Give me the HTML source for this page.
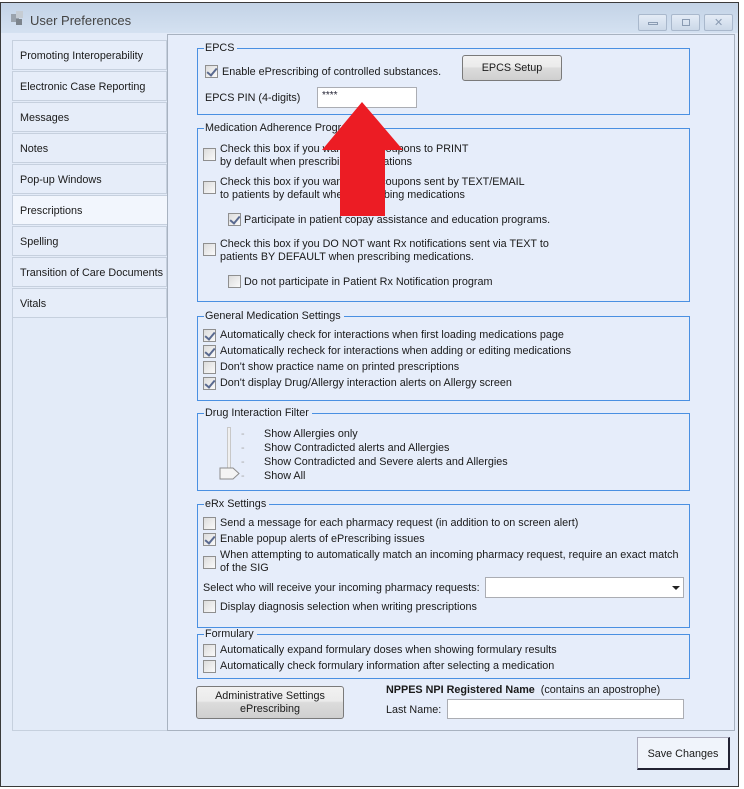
<!DOCTYPE html>
<html><head><style>
*{box-sizing:border-box;margin:0;padding:0}
body{width:744px;height:789px;background:#fff;font-family:"Liberation Sans",sans-serif;font-size:10.8px;color:#1a1a1a;position:relative;overflow:hidden}
.a{position:absolute;white-space:nowrap}
.win{position:absolute;left:0;top:2px;width:739px;height:785px;border:1px solid #3a3a3a;background:#e3ebf8}
.title{position:absolute;left:0;top:0;width:737px;height:30px;background:linear-gradient(#c3d3e6,#d4e1f1)}
.wb{position:absolute;top:11px;width:29px;height:17px;border:1px solid #a9b8cc;border-radius:2px;background:linear-gradient(#e4ecf6,#cbd8e8)}
.tab{position:absolute;left:12px;width:155px;height:30px;background:#e6edf9;border:1px solid #c6d0de;padding:9px 0 0 7px}
.panel{position:absolute;left:167px;top:34px;width:568px;height:697px;border:1px solid #a8b2c0;background:#e6edfa}
.g{position:absolute;border:1px solid #4a90e2}
.gl{position:absolute;top:-7px;left:6px;background:#e6edfa;padding:0 3px 0 1px}
.cb{position:absolute;width:13px;height:13px;border:1px solid #8f8f8f;background:linear-gradient(135deg,#dcdcdc,#fafafa)}
.cb.c::after{content:"";position:absolute;left:3px;top:0px;width:4px;height:8px;border:solid #5a6a90;border-width:0 2px 2px 0;transform:rotate(40deg)}
.btn{position:absolute;border:1px solid #7a7a7a;border-radius:3px;background:linear-gradient(#f2f2f2 0,#ebebeb 45%,#dcdcdc 50%,#cfcfcf);text-align:center}
.inp{position:absolute;background:#fff;border:1px solid #abadb3}
</style></head><body>
<div class="win">
 <div class="title"></div>
 <div class="a" style="left:10px;top:11px;width:8px;height:8px;background:#9aa3ad"></div>
 <div class="a" style="left:15px;top:8px;width:7px;height:7px;background:#c5ccd3"></div>
 <div class="a" style="left:15px;top:16px;width:6px;height:6px;background:#7c848c"></div>
 <div class="a" style="left:29px;top:10px;font-size:13px;color:#444">User Preferences</div>
 <div class="wb" style="left:637px"><div class="a" style="left:9px;top:7px;width:10px;height:3px;border:1px solid #8a9bb2"></div></div>
 <div class="wb" style="left:670px"><div class="a" style="left:10px;top:4px;width:8px;height:7px;border:1px solid #8a9bb2"></div></div>
 <div class="wb" style="left:703px"><div class="a" style="left:9px;top:1px;font-size:11px;color:#8a9bb2">✕</div></div>
</div>
<div class="tab" style="top:40px">Promoting Interoperability</div>
<div class="tab" style="top:71px">Electronic Case Reporting</div>
<div class="tab" style="top:102px">Messages</div>
<div class="tab" style="top:133px">Notes</div>
<div class="tab" style="top:164px">Pop-up Windows</div>
<div class="tab" style="top:195px;background:#f2f6fd;width:157px;border-right:none">Prescriptions</div>
<div class="tab" style="top:226px">Spelling</div>
<div class="tab" style="top:257px">Transition of Care Documents</div>
<div class="tab" style="top:288px;height:30px">Vitals</div>
<div class="a" style="left:12px;top:318px;width:155px;height:413px;border-left:1px solid #c6d0de;border-bottom:1px solid #c6d0de"></div>
<div class="panel"></div>

<div class="g" style="left:197px;top:48px;width:493px;height:67px"><div class="gl">EPCS</div></div>
<div class="cb c" style="left:205px;top:65px"></div>
<div class="a" style="left:222px;top:66px">Enable ePrescribing of controlled substances.</div>
<div class="btn" style="left:462px;top:55px;width:100px;height:26px;padding-top:6px">EPCS Setup</div>
<div class="a" style="left:205px;top:92px">EPCS PIN (4-digits)</div>
<div class="inp" style="left:317px;top:87px;width:100px;height:21px;padding:2px 4px;font-size:10px;color:#223">****</div>

<div class="g" style="left:197px;top:128px;width:493px;height:174px"><div class="gl">Medication Adherence Program</div></div>
<div class="cb" style="left:203px;top:148px"></div>
<div class="a" style="left:220px;top:143px;line-height:13px">Check this box if you want copay coupons to PRINT<br>by default when prescribing medications</div>
<div class="cb" style="left:203px;top:181px"></div>
<div class="a" style="left:220px;top:176px;line-height:13px">Check this box if you want copay coupons sent by TEXT/EMAIL<br>to patients by default when prescribing medications</div>
<div class="cb c" style="left:228px;top:213px"></div>
<div class="a" style="left:244px;top:214px">Participate in patient copay assistance and education programs.</div>
<div class="cb" style="left:203px;top:243px"></div>
<div class="a" style="left:220px;top:238px;line-height:13px">Check this box if you DO NOT want Rx notifications sent via TEXT to<br>patients BY DEFAULT when prescribing medications.</div>
<div class="cb" style="left:228px;top:275px"></div>
<div class="a" style="left:244px;top:276px">Do not participate in Patient Rx Notification program</div>

<div class="g" style="left:197px;top:316px;width:493px;height:85px"><div class="gl">General Medication Settings</div></div>
<div class="cb c" style="left:203px;top:329px"></div><div class="a" style="left:220px;top:329px">Automatically check for interactions when first loading medications page</div>
<div class="cb c" style="left:203px;top:345px"></div><div class="a" style="left:220px;top:345px">Automatically recheck for interactions when adding or editing medications</div>
<div class="cb" style="left:203px;top:361px"></div><div class="a" style="left:220px;top:361px">Don't show practice name on printed prescriptions</div>
<div class="cb c" style="left:203px;top:377px"></div><div class="a" style="left:220px;top:377px">Don't display Drug/Allergy interaction alerts on Allergy screen</div>

<div class="g" style="left:197px;top:413px;width:493px;height:78px"><div class="gl">Drug Interaction Filter</div></div>
<div class="a" style="left:227px;top:427px;width:4px;height:50px;border:1px solid #c8c8c8;background:#f0f0f0"></div>
<svg class="a" style="left:219px;top:467px" width="24" height="13"><path d="M1 1H14L20 6.5L14 12H1Z" fill="#f4f4f4" stroke="#8c8c8c"/></svg>
<div class="a" style="left:241px;top:427px;color:#aaa;line-height:14px">-<br>-<br>-<br>-</div>
<div class="a" style="left:264px;top:427px;line-height:14px">Show Allergies only<br>Show Contradicted alerts and Allergies<br>Show Contradicted and Severe alerts and Allergies<br>Show All</div>

<div class="g" style="left:197px;top:504px;width:493px;height:124px"><div class="gl">eRx Settings</div></div>
<div class="cb" style="left:203px;top:517px"></div><div class="a" style="left:220px;top:517px">Send a message for each pharmacy request (in addition to on screen alert)</div>
<div class="cb c" style="left:203px;top:533px"></div><div class="a" style="left:220px;top:533px">Enable popup alerts of ePrescribing issues</div>
<div class="cb" style="left:203px;top:556px"></div><div class="a" style="left:220px;top:549px;line-height:13px">When attempting to automatically match an incoming pharmacy request, require an exact match<br>of the SIG</div>
<div class="a" style="left:203px;top:582px">Select who will receive your incoming pharmacy requests:</div>
<div class="inp" style="left:485px;top:577px;width:199px;height:21px"><div class="a" style="left:186px;top:8px;border:4px solid transparent;border-top:4px solid #222;border-bottom:none;width:0;height:0"></div></div>
<div class="cb" style="left:203px;top:600px"></div><div class="a" style="left:220px;top:601px">Display diagnosis selection when writing prescriptions</div>

<div class="g" style="left:197px;top:634px;width:493px;height:45px"><div class="gl">Formulary</div></div>
<div class="cb" style="left:203px;top:644px"></div><div class="a" style="left:220px;top:644px">Automatically expand formulary doses when showing formulary results</div>
<div class="cb" style="left:203px;top:660px"></div><div class="a" style="left:220px;top:660px">Automatically check formulary information after selecting a medication</div>

<div class="btn" style="left:196px;top:686px;width:148px;height:33px;padding-top:3px;line-height:13px">Administrative Settings<br>ePrescribing</div>
<div class="a" style="left:386px;top:684px"><b>NPPES NPI Registered Name</b>&nbsp; (contains an apostrophe)</div>
<div class="a" style="left:386px;top:704px">Last Name:</div>
<div class="inp" style="left:447px;top:699px;width:237px;height:20px"></div>

<div class="a" style="left:637px;top:737px;width:93px;height:33px;background:#f0f4fb;border:1px solid #aab;border-right:2px solid #223;border-bottom:2px solid #223;text-align:center;padding-top:10px">Save Changes</div>

<svg class="a" style="left:0;top:0" width="744" height="789"><polygon points="362,102 403,150 385,150 385,216 340,216 340,150 322,150" fill="#ec1c24"/></svg>
</body></html>
